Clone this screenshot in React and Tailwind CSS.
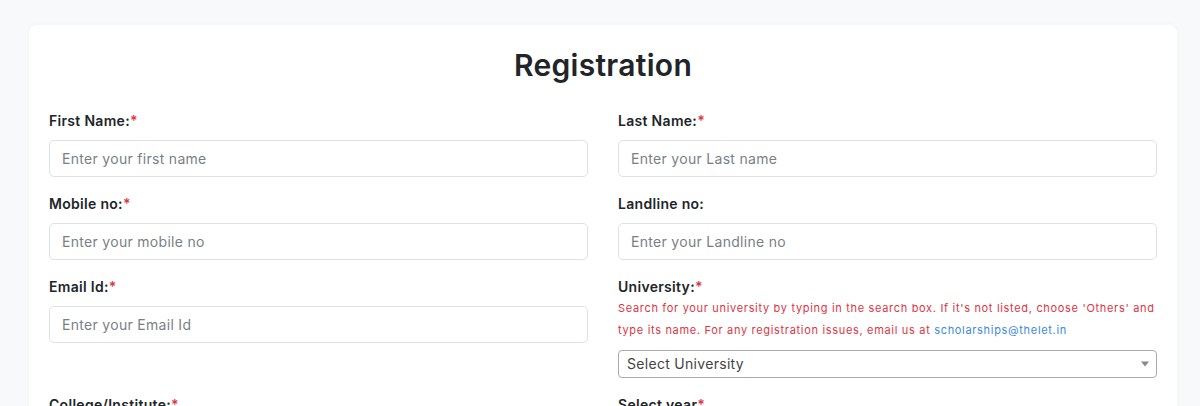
import React from 'react'

const font = { fontFamily: 'Inter, "Noto Sans", sans-serif' }

function Label({ text, required }) {
  return (
    <label className="block text-sm leading-[21px] font-semibold text-[#212529] tracking-[0.3px]">
      {text}
      {required && <span className="text-[#dc3545]">*</span>}
    </label>
  )
}

function TextField({ label, required, placeholder }) {
  return (
    <div className="mb-4">
      <Label text={label} required={required} />
      <input
        type="text"
        placeholder={placeholder}
        className="mt-[9px] block w-full h-[37px] px-3 rounded-[5px] border border-[#dee2e6] bg-white text-sm tracking-[0.3px] text-[#212529] placeholder:text-[#7a7f86] outline-none"
      />
    </div>
  )
}

export default function App() {
  return (
    <div className="min-h-screen bg-[#f8f9fb] pt-[25px] pl-[29px] pr-[23px]" style={font}>
      <div className="bg-white rounded-lg shadow-[0_0_6px_rgba(0,0,0,0.03)] px-5 pt-[22px] pb-8">
        <h1 className="text-center text-[30px] leading-9 font-semibold text-[#212529] tracking-[0.3px] mb-[27px]">
          Registration
        </h1>

        <form className="grid grid-cols-2 gap-x-[30px]">
          <TextField label="First Name:" required placeholder="Enter your first name" />
          <TextField label="Last Name:" required placeholder="Enter your Last name" />
          <TextField label="Mobile no:" required placeholder="Enter your mobile no" />
          <TextField label="Landline no:" placeholder="Enter your Landline no" />
          <TextField label="Email Id:" required placeholder="Enter your Email Id" />

          <div className="mb-4">
            <Label text="University:" required />
            <p className="text-[11px] leading-[22px] tracking-[0.68px] whitespace-nowrap text-[#dc3545]">
              Search for your university by typing in the search box. If it's not listed, choose 'Others' and
              <br />
              type its name. For any registration issues, email us at{' '}
              <a href="#" className="text-[#3b8ad9]">scholarships@thelet.in</a>
            </p>
            <div className="mt-[9px] relative h-[28px] rounded-[4px] border border-[#aaaaaa] bg-white flex items-center pl-2 pr-6">
              <span className="text-sm tracking-[0.3px] text-[#444]">Select University</span>
              <span className="absolute right-[7px] top-1/2 -translate-y-1/2 w-0 h-0 border-x-[4px] border-x-transparent border-t-[5px] border-t-[#888]" />
            </div>
          </div>

          <TextField label="College/Institute:" required placeholder="Enter your College/Institute" />
          <div className="mb-4">
            <Label text="Select year" required />
            <div className="mt-[9px] relative h-[37px] rounded-[5px] border border-[#dee2e6] bg-white flex items-center px-3">
              <span className="text-sm text-[#212529]">Select year</span>
            </div>
          </div>
        </form>
      </div>
    </div>
  )
}
